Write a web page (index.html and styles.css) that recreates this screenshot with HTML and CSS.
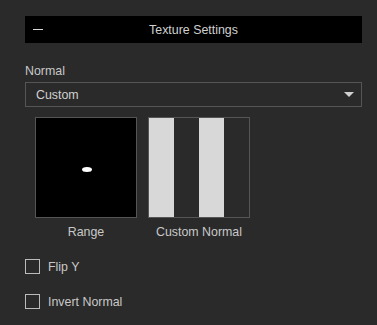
FILE: index.html
```html
<!DOCTYPE html>
<html lang="en">
<head>
    <meta charset="UTF-8">
    <title>Texture Settings</title>
    <link rel="stylesheet" href="styles.css">
</head>
<body>
    <div class="panel">
        <div class="header">
            <span class="collapse"></span>
            <span class="title">Texture Settings</span>
        </div>

        <div class="field-label">Normal</div>
        <div class="dropdown">
            <span>Custom</span>
            <span class="arrow"></span>
        </div>

        <div class="thumbs">
            <div class="thumb">
                <div class="preview range"><span class="dot"></span></div>
                <div class="caption">Range</div>
            </div>
            <div class="thumb">
                <div class="preview stripes">
                    <span class="light"></span>
                    <span class="dark"></span>
                    <span class="light"></span>
                    <span class="dark"></span>
                </div>
                <div class="caption">Custom Normal</div>
            </div>
        </div>

        <label class="check"><span class="box"></span>Flip Y</label>
        <label class="check"><span class="box"></span>Invert Normal</label>
    </div>
</body>
</html>
```

FILE: styles.css
```css
body {
    margin: 0;
    background-color: #2a2a2a;
    font-family: Arial, "Liberation Sans", sans-serif;
    font-size: 12.4px;
    color: #c8c8c8;
}

.panel {
    padding: 16px 15px 0 25px;
}

.header {
    position: relative;
    height: 27px;
    background-color: #000;
    display: flex;
    align-items: center;
    justify-content: center;
}

.collapse {
    position: absolute;
    left: 8px;
    top: 13px;
    width: 10px;
    height: 1px;
    background-color: #d8d8d8;
}

.title {
    color: #d0d0d0;
}

.field-label {
    margin-top: 21px;
    line-height: 14px;
}

.dropdown {
    margin-top: 4px;
    height: 23px;
    border: 1px solid #555;
    display: flex;
    align-items: center;
    justify-content: space-between;
    padding: 0 7px 0 10px;
    color: #d0d0d0;
}

.arrow {
    width: 0;
    height: 0;
    border-left: 5px solid transparent;
    border-right: 5px solid transparent;
    border-top: 5px solid #d0d0d0;
}

.thumbs {
    display: flex;
    gap: 11px;
    margin: 10px 0 0 10px;
}

.thumb {
    display: flex;
    flex-direction: column;
    align-items: center;
}

.preview {
    width: 100px;
    height: 99px;
    border: 1px solid #555;
}

.range {
    background-color: #000;
    position: relative;
}

.dot {
    position: absolute;
    left: 46px;
    top: 49px;
    width: 10px;
    height: 5px;
    border-radius: 50%;
    background-color: #fff;
}

.stripes {
    display: flex;
}

.stripes span {
    flex: 1;
}

.stripes .light {
    background-color: #d8d8d8;
}

.stripes .dark {
    background-color: #2a2a2a;
}

.caption {
    margin-top: 7px;
    line-height: 14px;
}

.check {
    display: flex;
    align-items: center;
    gap: 8px;
    height: 15px;
    margin-top: 20px;
}

.check + .check {
    margin-top: 20px;
}

.box {
    width: 13px;
    height: 13px;
    border: 1px solid #bbb;
}
```
